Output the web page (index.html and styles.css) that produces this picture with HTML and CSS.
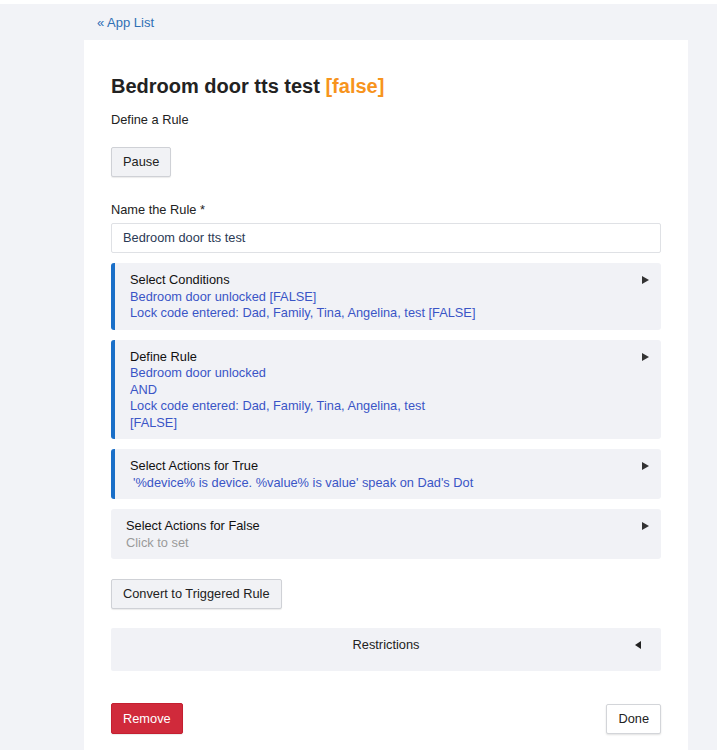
FILE: index.html
```html
<!DOCTYPE html>
<html>
<head>
<meta charset="utf-8">
<link rel="stylesheet" href="styles.css">
</head>
<body>
<div class="page">
  <div class="topbar"><a class="back" href="#">« App List</a></div>
  <div class="card">
    <h1 class="title">Bedroom door tts test <span class="state">[false]</span></h1>
    <p class="subtitle">Define a Rule</p>
    <div class="row"><button class="btn">Pause</button></div>
    <label class="label">Name the Rule *</label>
    <div class="input">Bedroom door tts test</div>

    <div class="section accent">
      <div class="sec-body">
        <div class="sec-title">Select Conditions</div>
        <div class="sec-val">Bedroom door unlocked [FALSE]</div>
        <div class="sec-val">Lock code entered: Dad, Family, Tina, Angelina, test [FALSE]</div>
      </div>
      <span class="arrow-r"></span>
    </div>

    <div class="section accent">
      <div class="sec-body">
        <div class="sec-title">Define Rule</div>
        <div class="sec-val">Bedroom door unlocked</div>
        <div class="sec-val">AND</div>
        <div class="sec-val">Lock code entered: Dad, Family, Tina, Angelina, test</div>
        <div class="sec-val">[FALSE]</div>
      </div>
      <span class="arrow-r"></span>
    </div>

    <div class="section accent">
      <div class="sec-body">
        <div class="sec-title">Select Actions for True</div>
        <div class="sec-val indent">'%device% is device. %value% is value' speak on Dad's Dot</div>
      </div>
      <span class="arrow-r"></span>
    </div>

    <div class="section">
      <div class="sec-body">
        <div class="sec-title">Select Actions for False</div>
        <div class="sec-hint">Click to set</div>
      </div>
      <span class="arrow-r"></span>
    </div>

    <div class="row convert"><button class="btn">Convert to Triggered Rule</button></div>

    <div class="restrictions">
      <span class="res-text">Restrictions</span>
      <span class="arrow-l"></span>
    </div>

    <div class="footer">
      <button class="btn danger">Remove</button>
      <button class="btn light">Done</button>
    </div>
  </div>
</div>
</body>
</html>
```

FILE: styles.css
```css
* { box-sizing: border-box; }
html, body { margin: 0; padding: 0; }
body {
  background: #ffffff;
  font-family: "Liberation Sans", Arial, sans-serif;
  font-size: 12.8px;
  color: #222;
}
.page {
  margin-top: 4px;
  background: #f2f3f7;
  min-height: 746px;
  padding: 0 29px 0 84px;
}
.topbar {
  height: 36px;
  padding: 11px 0 0 13px;
  line-height: 16px;
}
.back {
  color: #2f6fb5;
  text-decoration: none;
  font-size: 13px;
}
.card {
  background: #fff;
  padding: 34px 27px 20px 27px;
  min-height: 710px;
}
.title {
  margin: 0;
  font-size: 20px;
  font-weight: bold;
  color: #222;
  line-height: 24px;
}
.state { color: #f7941d; }
.subtitle {
  margin: 14px 0 0;
  line-height: 16px;
}
.row { margin-top: 19px; }
.btn {
  font-family: "Liberation Sans", Arial, sans-serif;
  font-size: 12.8px;
  color: #222;
  background: #f1f2f5;
  border: 1px solid #cfd1d6;
  border-radius: 2px;
  height: 30px;
  padding: 0 11px;
  line-height: 28px;
  box-shadow: 0 1px 1px rgba(0,0,0,0.08);
}
.label {
  display: block;
  margin-top: 25px;
  line-height: 16px;
}
.input {
  margin-top: 5px;
  height: 30px;
  border: 1px solid #dfe1e5;
  border-radius: 2px;
  padding: 0 11px;
  line-height: 28px;
  color: #2b3a55;
}
.section {
  margin-top: 10px;
  background: #f1f2f6;
  border-radius: 3px;
  padding: 9px 12px 8px 15px;
  display: flex;
  justify-content: space-between;
  align-items: flex-start;
  line-height: 16.5px;
}
.section.accent {
  border-left: 4px solid #1a6fc8;
}
.sec-title { color: #111; }
.sec-val { color: #3a55c6; }
.sec-val.indent { padding-left: 3px; }
.sec-hint { color: #9a9a9a; }
.arrow-r {
  width: 0; height: 0;
  margin-top: 4px;
  border-left: 7px solid #333;
  border-top: 4px solid transparent;
  border-bottom: 4px solid transparent;
}
.convert { margin-top: 20px; }
.restrictions {
  margin-top: 19px;
  background: #f1f2f6;
  border-radius: 2px;
  height: 43px;
  display: flex;
  align-items: flex-start;
  padding-top: 9px;
  line-height: 16.5px;
}
.res-text {
  flex: 1;
  text-align: center;
  padding-left: 26px;
}
.arrow-l {
  width: 0; height: 0;
  margin: 4px 20px 0 0;
  border-right: 6px solid #222;
  border-top: 4px solid transparent;
  border-bottom: 4px solid transparent;
}
.footer {
  margin-top: 32px;
  display: flex;
  justify-content: space-between;
  align-items: center;
}
.btn.danger {
  background: #d02a3b;
  border-color: #c41f30;
  color: #fff;
  height: 31px;
}
.btn.light {
  background: #fff;
  border-color: #d3d5d9;
  box-shadow: 0 1px 2px rgba(0,0,0,0.12);
}
```
